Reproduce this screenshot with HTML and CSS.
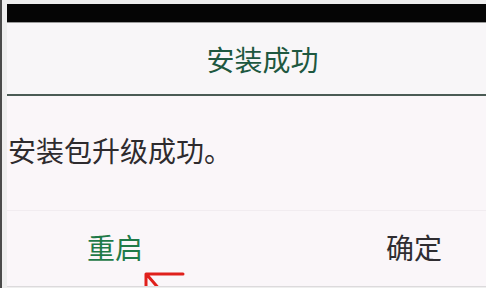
FILE: index.html
```html
<!DOCTYPE html>
<html lang="zh-CN">
<head>
  <meta charset="UTF-8" />
  <meta name="viewport" content="width=device-width, initial-scale=1.0"/>
  <title>安装成功</title>
  <link rel="stylesheet" href="styles.css">
</head>
<body>
  <div class="frame">
    <div class="screen">
      <div class="statusbar"></div>
      <div class="dialog-title">安装成功</div>
      <div class="divider"></div>
      <div class="dialog-message">安装包升级成功。</div>
      <div class="dialog-actions">
        <span class="btn btn-restart">重启</span>
        <span class="btn btn-ok">确定</span>
      </div>
      <svg class="arrow" width="50" height="20" viewBox="0 0 50 20">
        <path d="M42 3 L5 3 M5 3 L5 20 M7 5 L20 20" stroke="#e0201c" stroke-width="3" fill="none" stroke-linecap="round"/>
      </svg>
    </div>
  </div>
</body>
</html>
```

FILE: styles.css
```css
html {
  overflow: hidden;
}
body {
  margin: 0;
  background: #eeeeee;
  border-left: 2px solid #4a4a4a;
  height: 288px;
  overflow: hidden;
  font-family: "Noto Sans CJK SC", "Noto Sans", sans-serif;
}
.frame {
  padding: 4px 0 0 5px;
}
.screen {
  position: relative;
  overflow: hidden;
  background: #faf6f9;
  height: 282px;
  border-bottom: 1px solid #dcdadc;
}
.statusbar {
  height: 18px;
  background: #050505;
  border-bottom: 1px solid #9a9a9a;
}
.dialog-title {
  height: 71px;
  display: flex;
  align-items: center;
  justify-content: center;
  font-size: 28px;
  color: #1e5840;
  background: #f8f6f8;
  padding-left: 32px;
}
.divider {
  height: 2px;
  background: #4b5b55;
}
.dialog-message {
  padding: 38px 0 0 1px;
  font-size: 28px;
  line-height: 32px;
  color: #2e2b2e;
  height: 76px;
  border-bottom: 1px solid #f1ecf0;
}
.dialog-actions {
  display: flex;
  justify-content: space-between;
  padding: 20px 44px 0 80px;
}
.btn {
  font-size: 28px;
  line-height: 32px;
}
.btn-restart {
  color: #1f7a48;
}
.btn-ok {
  color: #2f2d31;
}
.arrow {
  position: absolute;
  left: 134px;
  top: 267px;
}
```
